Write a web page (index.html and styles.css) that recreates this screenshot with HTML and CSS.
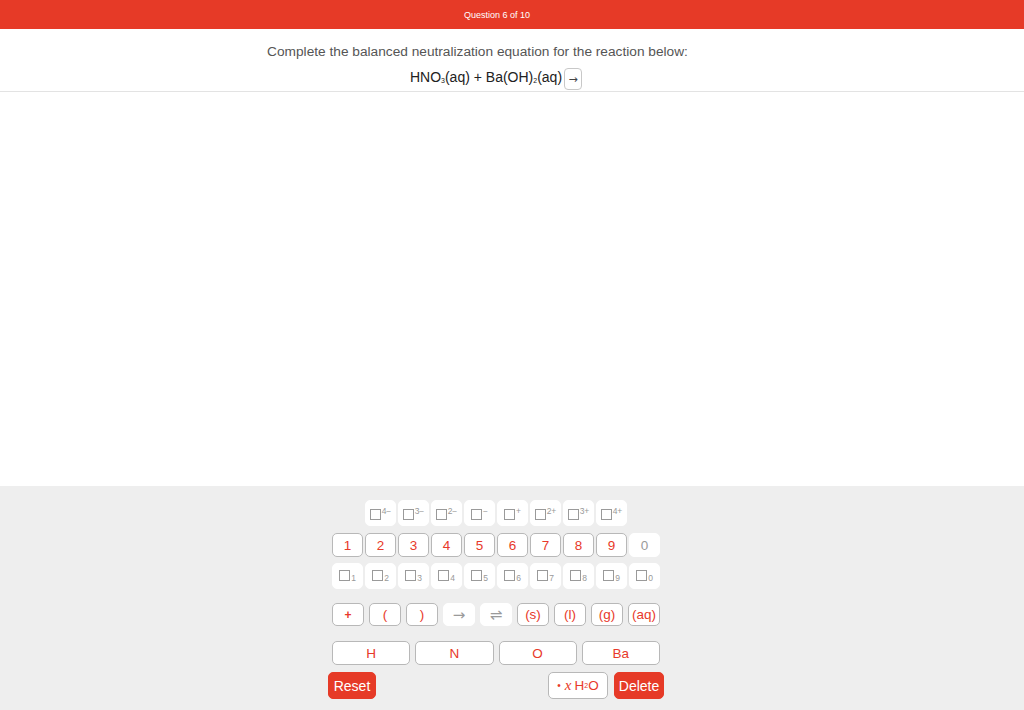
FILE: index.html
```html
<!DOCTYPE html>
<html>
<head>
<meta charset="utf-8">
<link rel="stylesheet" href="styles.css">
</head>
<body>
<div class="page">
  <header class="topbar"><span class="qnum">Question 6 of 10</span></header>
  <section class="question">
    <div class="prompt">Complete the balanced neutralization equation for the reaction below:</div>
    <div class="equation">
      <span class="eq-text">HNO<sub>3</sub>(aq) + Ba(OH)<sub>2</sub>(aq)</span><span class="eq-box">→</span>
    </div>
  </section>
  <main class="work"></main>
  <section class="panel">
    <div class="keypad">
      <div class="row charges">
        <button class="key flat"><span class="sq"></span><sup>4−</sup></button>
        <button class="key flat"><span class="sq"></span><sup>3−</sup></button>
        <button class="key flat"><span class="sq"></span><sup>2−</sup></button>
        <button class="key flat"><span class="sq"></span><sup>−</sup></button>
        <button class="key flat"><span class="sq"></span><sup>+</sup></button>
        <button class="key flat"><span class="sq"></span><sup>2+</sup></button>
        <button class="key flat"><span class="sq"></span><sup>3+</sup></button>
        <button class="key flat"><span class="sq"></span><sup>4+</sup></button>
      </div>
      <div class="row digits">
        <button class="key">1</button>
        <button class="key">2</button>
        <button class="key">3</button>
        <button class="key">4</button>
        <button class="key">5</button>
        <button class="key">6</button>
        <button class="key">7</button>
        <button class="key">8</button>
        <button class="key">9</button>
        <button class="key flat dim">0</button>
      </div>
      <div class="row subs">
        <button class="key flat"><span class="sq"></span><sub>1</sub></button>
        <button class="key flat"><span class="sq"></span><sub>2</sub></button>
        <button class="key flat"><span class="sq"></span><sub>3</sub></button>
        <button class="key flat"><span class="sq"></span><sub>4</sub></button>
        <button class="key flat"><span class="sq"></span><sub>5</sub></button>
        <button class="key flat"><span class="sq"></span><sub>6</sub></button>
        <button class="key flat"><span class="sq"></span><sub>7</sub></button>
        <button class="key flat"><span class="sq"></span><sub>8</sub></button>
        <button class="key flat"><span class="sq"></span><sub>9</sub></button>
        <button class="key flat"><span class="sq"></span><sub>0</sub></button>
      </div>
      <div class="row symbols">
        <button class="key plus">+</button>
        <button class="key">(</button>
        <button class="key">)</button>
        <button class="key flat dim arrow">→</button>
        <button class="key flat dim arrow">⇌</button>
        <button class="key">(s)</button>
        <button class="key">(l)</button>
        <button class="key">(g)</button>
        <button class="key">(aq)</button>
      </div>
      <div class="row elements">
        <button class="key">H</button>
        <button class="key">N</button>
        <button class="key">O</button>
        <button class="key">Ba</button>
      </div>
      <div class="row actions">
        <button class="act red">Reset</button>
        <div class="spacer"></div>
        <button class="act water"><span class="dot">•</span><i class="x">x</i> H<sub>2</sub>O</button>
        <button class="act red">Delete</button>
      </div>
    </div>
  </section>
</div>
</body>
</html>
```
FILE: styles.css
```css
html, body {
  margin: 0;
  padding: 0;
  background: #fff;
  font-family: "Liberation Sans", Arial, sans-serif;
}
.page {
  width: 1024px;
  height: 710px;
  display: flex;
  flex-direction: column;
  overflow: hidden;
}
.topbar {
  height: 29px;
  background: #e63a27;
  display: flex;
  align-items: center;
  justify-content: center;
  padding-right: 30px;
  flex: none;
}
.qnum {
  color: #fff;
  font-size: 9px;
  line-height: 10px;
}
.question {
  flex: none;
  box-sizing: border-box;
  height: 63px;
  border-bottom: 1px solid #e3e3e3;
}
.prompt {
  text-align: center;
  padding-right: 69px;
  padding-top: 15px;
  font-size: 13.7px;
  line-height: 16px;
  color: #555;
}
.equation {
  display: flex;
  justify-content: center;
  align-items: center;
  padding-right: 32px;
  margin-top: 8px;
}
.eq-text {
  font-size: 14px;
  color: #222;
  line-height: 16px;
}
.eq-text sub {
  font-size: 7px;
  vertical-align: -1px;
}
.eq-box {
  margin-left: 2px;
  width: 16px;
  height: 20px;
  border: 1px solid #c8c8c8;
  border-radius: 4px;
  font-family: "DejaVu Sans", sans-serif;
  font-size: 11px;
  color: #444;
  display: flex;
  align-items: center;
  justify-content: center;
  line-height: 1;
}
.work {
  flex: 1;
}
.panel {
  height: 224px;
  flex: none;
  background: #eeeeee;
  padding-right: 32px;
  box-sizing: border-box;
  padding-top: 14px;
}
.keypad {
  width: 336px;
  margin: 0 auto;
}
.row {
  display: grid;
  padding: 0 4px;
}
.key {
  font-family: "Liberation Sans", Arial, sans-serif;
  background: #fff;
  border: 1px solid #b8b8b8;
  border-radius: 5px;
  color: #e8392a;
  font-size: 13.5px;
  padding: 0;
  margin: 0;
  display: flex;
  align-items: center;
  justify-content: center;
  box-sizing: border-box;
}
.key.flat {
  border-color: #fff;
}
.key.dim {
  color: #9a9a9a;
}
.charges {
  grid-template-columns: repeat(8, 31px);
  column-gap: 2px;
  padding-left: 37px;
  height: 26px;
}
.digits {
  grid-template-columns: repeat(10, 31px);
  column-gap: 2px;
  height: 24px;
  margin-top: 7px;
}
.subs {
  grid-template-columns: repeat(10, 31px);
  column-gap: 2px;
  height: 26px;
  margin-top: 6px;
}
.symbols {
  grid-template-columns: repeat(9, 32px);
  column-gap: 5px;
  height: 23px;
  margin-top: 14px;
}
.elements {
  grid-template-columns: repeat(4, 1fr);
  column-gap: 5px;
  height: 24px;
  margin-top: 15px;
}
.sq {
  display: inline-block;
  width: 11px;
  height: 11px;
  border: 1px solid #9a9a9a;
  box-sizing: border-box;
}
.charges .sq {
  margin-top: 3px;
}
.key sup {
  font-size: 8.5px;
  color: #999;
  align-self: flex-start;
  margin-top: 6px;
  margin-left: 1px;
  line-height: 1;
  vertical-align: 0;
}
.key sub {
  font-size: 8.5px;
  color: #999;
  align-self: flex-end;
  margin-bottom: 6px;
  margin-left: 1px;
  line-height: 1;
  vertical-align: 0;
}
.subs .sq {
  margin-bottom: 2px;
}
.plus {
  font-size: 12px;
  font-weight: bold;
}
.key.arrow {
  font-family: "DejaVu Sans", sans-serif;
  font-size: 15px;
}
.actions {
  display: flex;
  padding: 0;
  margin-top: 7px;
  height: 27px;
}
.spacer {
  flex: 1;
}
.act {
  font-family: "Liberation Sans", Arial, sans-serif;
  border-radius: 5px;
  font-size: 14px;
  padding: 0;
  margin: 0;
  box-sizing: border-box;
  display: flex;
  align-items: center;
  justify-content: center;
}
.act.red {
  background: #e63a27;
  color: #fff;
  border: 1px solid #e63a27;
  width: 48px;
}
.act.red:last-child {
  width: 50px;
  margin-left: 6px;
}
.act.water {
  background: #fff;
  border: 1px solid #b8b8b8;
  color: #e8392a;
  width: 60px;
  font-size: 13.5px;
}
.dot {
  font-size: 10px;
  margin-right: 4px;
}
.x {
  font-family: "Liberation Serif", "Times New Roman", serif;
  font-size: 15px;
  margin-right: 3px;
}
.water sub {
  font-size: 7px;
  vertical-align: -1px;
}
```
